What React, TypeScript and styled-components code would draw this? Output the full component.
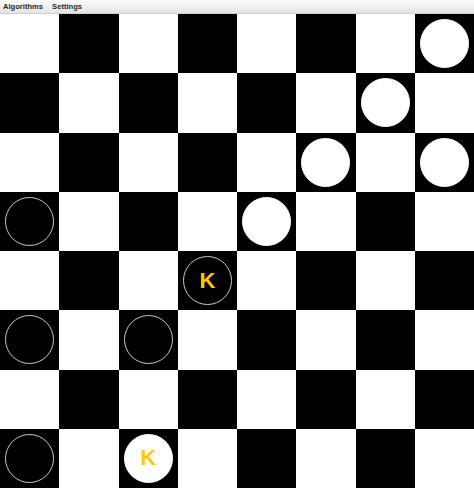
import * as React from "react";
import styled, { createGlobalStyle } from "styled-components";

type Side = "white" | "black";

interface Piece {
  row: number;
  col: number;
  side: Side;
  king?: boolean;
}

const pieces: Piece[] = [
  { row: 0, col: 7, side: "white" },
  { row: 1, col: 6, side: "white" },
  { row: 2, col: 5, side: "white" },
  { row: 2, col: 7, side: "white" },
  { row: 3, col: 0, side: "black" },
  { row: 3, col: 4, side: "white" },
  { row: 4, col: 3, side: "black", king: true },
  { row: 5, col: 0, side: "black" },
  { row: 5, col: 2, side: "black" },
  { row: 7, col: 0, side: "black" },
  { row: 7, col: 2, side: "white", king: true },
];

const pieceAt = (row: number, col: number) =>
  pieces.find(p => p.row === row && p.col === col);

class App extends React.Component {
  render() {
    const cells = [];
    for (let r = 0; r < 8; r++) {
      for (let c = 0; c < 8; c++) {
        const p = pieceAt(r, c);
        cells.push(
          <Square key={`${r}-${c}`} dark={(r + c) % 2 === 1}>
            {p && (
              <Checker side={p.side}>{p.king && <Crown>K</Crown>}</Checker>
            )}
          </Square>
        );
      }
    }
    return (
      <>
        <Global />
        <Window>
          <MenuBar>
            <Menu>Algorithms</Menu>
            <Menu>Settings</Menu>
          </MenuBar>
          <Board>{cells}</Board>
        </Window>
      </>
    );
  }
}

export default App;

const Global = createGlobalStyle`
  html, body {
    margin: 0;
    padding: 0;
    background: #fff;
    overflow: hidden;
  }
`;

const Window = styled.div`
  width: 474px;
  height: 488px;
  display: flex;
  flex-direction: column;
`;

const MenuBar = styled.div`
  height: 14px;
  flex-shrink: 0;
  display: flex;
  align-items: center;
  gap: 9px;
  padding: 0 0 0 3px;
  background: linear-gradient(#fbfbfb, #e4e4e4);
  border-bottom: 1px solid #d0d0d0;
  box-sizing: border-box;
`;

const Menu = styled.span`
  font-family: "Liberation Sans", Arial, sans-serif;
  font-size: 7.6px;
  font-weight: bold;
  color: #2a2a2a;
  line-height: 1;
`;

const Board = styled.div`
  flex: 1;
  display: grid;
  grid-template-columns: repeat(8, 1fr);
  grid-template-rows: repeat(8, 1fr);
`;

interface SquareProps {
  dark: boolean;
}

const Square = styled.div<SquareProps>`
  background: ${props => (props.dark ? "#000" : "#fff")};
  display: flex;
  justify-content: center;
  align-items: center;
`;

interface CheckerProps {
  side: Side;
}

const Checker = styled.div<CheckerProps>`
  width: 49px;
  height: 49px;
  border-radius: 50%;
  box-sizing: border-box;
  background: ${props => (props.side === "white" ? "#fff" : "#000")};
  border: 1px solid
    ${props => (props.side === "white" ? "#fff" : "#c8c8c8")};
  display: flex;
  justify-content: center;
  align-items: center;
`;

const Crown = styled.span`
  font-family: "Liberation Sans", Arial, sans-serif;
  font-size: 22px;
  font-weight: bold;
  color: #ffc800;
  line-height: 1;
`;
